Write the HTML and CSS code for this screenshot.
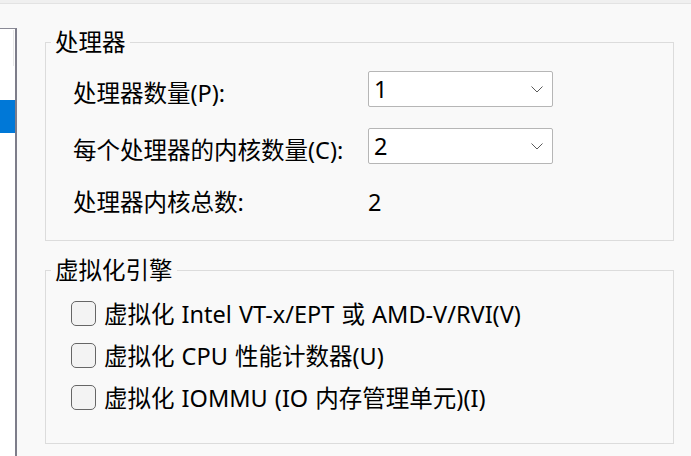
FILE: index.html
```html
<!DOCTYPE html>
<html lang="zh-CN">
<head>
<meta charset="utf-8">
<link rel="stylesheet" href="styles.css">
</head>
<body>
<div class="topbar"></div>
<div class="main">
  <div class="sidelist">
    <div class="track"></div>
    <div class="selected"></div>
  </div>
  <div class="content">
    <fieldset class="group">
      <legend>处理器</legend>
      <div class="form">
        <label class="lbl">处理器数量(P):</label>
        <div class="select"><span class="val">1</span><svg class="chev" viewBox="0 0 12 7" width="12" height="7"><path d="M0.5 0.5 L6 6 L11.5 0.5" fill="none" stroke="#5a5a5a" stroke-width="1"/></svg></div>
        <label class="lbl">每个处理器的内核数量(C):</label>
        <div class="select"><span class="val">2</span><svg class="chev" viewBox="0 0 12 7" width="12" height="7"><path d="M0.5 0.5 L6 6 L11.5 0.5" fill="none" stroke="#5a5a5a" stroke-width="1"/></svg></div>
        <span class="lbl last">处理器内核总数:</span>
        <span class="total">2</span>
      </div>
    </fieldset>
    <fieldset class="group group2">
      <legend>虚拟化引擎</legend>
      <div class="checks">
        <label class="check"><span class="box"></span><span>虚拟化 Intel VT-x/EPT 或 AMD-V/RVI(V)</span></label>
        <label class="check"><span class="box"></span><span>虚拟化 CPU 性能计数器(U)</span></label>
        <label class="check"><span class="box"></span><span>虚拟化 IOMMU (IO 内存管理单元)(I)</span></label>
      </div>
    </fieldset>
  </div>
</div>
</body>
</html>
```
FILE: styles.css
```css
* { box-sizing: border-box; }
html, body { margin: 0; padding: 0; }
body {
  width: 691px;
  height: 456px;
  overflow: hidden;
  background: #f9f9f9;
  font-family: "Noto Sans", "Noto Sans CJK SC", sans-serif;
  font-size: 23.5px;
  color: #000;
}
.topbar {
  height: 4px;
  background: #f0f0f0;
  border-bottom: 1px solid #e3e3e3;
}
.main {
  display: flex;
  align-items: flex-start;
}
.sidelist {
  margin-top: 24px;
  width: 17px;
  height: 440px;
  background: #fff;
  border-top: 1px solid #8a8a96;
  border-right: 2px solid #7d7d8a;
  display: flex;
  flex-direction: column;
  align-items: flex-end;
}
.track {
  width: 1px;
  height: 36px;
  margin-top: 1px;
  margin-right: 1px;
  background: #e8e8e8;
}
.selected {
  align-self: stretch;
  height: 33px;
  margin-top: 34px;
  background: #0078d7;
}
.content {
  margin-left: 28px;
  width: 629px;
}
.group {
  margin: 0;
  margin-top: 23px;
  padding: 0;
  border: 1px solid #dcdcdc;
  min-width: 0;
}
.group legend {
  margin-left: 5px;
  padding: 0 4px;
  line-height: 30px;
  height: 30px;
}
.form {
  display: grid;
  grid-template-columns: 295px 185px;
  grid-auto-rows: 36px;
  row-gap: 21px;
  padding: 14px 0 19px 27px;
}
.lbl {
  align-self: center;
  padding-top: 8px;
  line-height: 30px;
  white-space: nowrap;
}
.lbl.last { padding-top: 0; margin-top: -2px; }
.select {
  height: 36px;
  background: #fff;
  border: 1px solid #b6b6b6;
  border-radius: 2px;
  display: flex;
  align-items: center;
  padding: 0 9px 0 5px;
}
.val { flex: 1; line-height: 30px; }
.chev { display: block; }
.total {
  align-self: center;
  margin-top: -2px;
  line-height: 30px;
}
.group2 {
  margin-top: 14px;
}
.checks {
  display: flex;
  flex-direction: column;
  padding: 7px 0 25px 25px;
}
.check {
  height: 42px;
  display: flex;
  align-items: center;
  gap: 8px;
  white-space: nowrap;
  word-spacing: 1px;
}
.box {
  width: 25px;
  height: 25px;
  border: 1px solid #666;
  border-radius: 5px;
  background: #f3f3f3;
}
```
